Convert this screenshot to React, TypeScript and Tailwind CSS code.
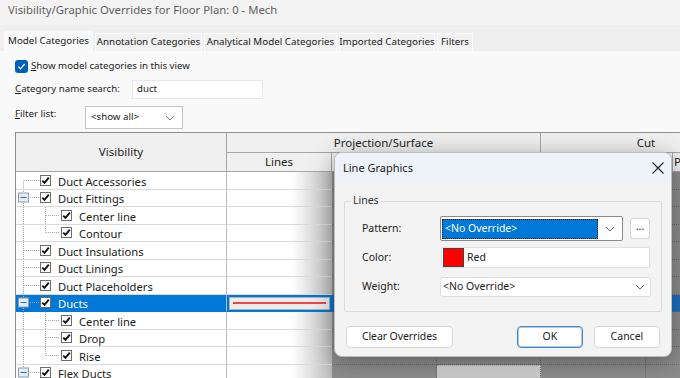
import React from "react";

type Row = {
  label: string;
  level: 1 | 2;
  expand?: boolean;
  first?: boolean;
  last?: boolean;
  selected?: boolean;
};

const rows: Row[] = [
  { label: "Duct Accessories", level: 1, first: true },
  { label: "Duct Fittings", level: 1, expand: true },
  { label: "Center line", level: 2 },
  { label: "Contour", level: 2, last: true },
  { label: "Duct Insulations", level: 1 },
  { label: "Duct Linings", level: 1 },
  { label: "Duct Placeholders", level: 1 },
  { label: "Ducts", level: 1, expand: true, selected: true },
  { label: "Center line", level: 2 },
  { label: "Drop", level: 2 },
  { label: "Rise", level: 2, last: true },
  { label: "Flex Ducts", level: 1, expand: true },
];

const dot = { stroke: "#a3a3a3", strokeWidth: 1, strokeDasharray: "1 1" };

// dotted tree connectors + expand box
const TreeLines = ({ row }: { row: Row }) => {
  const w = row.level === 1 ? 24 : 45;
  return (
    <svg width={w} height={17} className="shrink-0" viewBox={`0 0 ${w} 17`}>
      <line x1={7.5} y1={row.first ? 8.5 : 0} x2={7.5} y2={17} {...dot} />
      {row.level === 1 && <line x1={8} y1={8.5} x2={23} y2={8.5} {...dot} />}
      {row.level === 2 && (
        <>
          <line x1={29.5} y1={0} x2={29.5} y2={row.last ? 8.5 : 17} {...dot} />
          <line x1={30} y1={8.5} x2={44} y2={8.5} {...dot} />
        </>
      )}
      {row.expand && (
        <>
          <rect x={2.5} y={4} width={10} height={9} fill="#e4ebf3" stroke="#8d9db3" />
          <line x1={4.5} y1={8.5} x2={10.5} y2={8.5} stroke="#3f67a6" strokeWidth={1} />
        </>
      )}
    </svg>
  );
};

const SmallCheck = () => (
  <span className="w-[11px] h-[11px] shrink-0 bg-white border border-[#6d6d6d] flex items-center justify-center">
    <svg width="9" height="9" viewBox="0 0 9 9">
      <path d="M1.3 4.6 L3.5 6.9 L7.8 1.6" fill="none" stroke="#111" strokeWidth="1.9" />
    </svg>
  </span>
);

const Chevron = ({ color = "#6b6b6b" }: { color?: string }) => (
  <svg width="10" height="6" viewBox="0 0 10 6">
    <path d="M1 1 L5 5 L9 1" fill="none" stroke={color} strokeWidth="1" />
  </svg>
);

const LineGraphics = () => (
  <div className="absolute left-[334px] top-[152px] w-[338px] h-[205px] rounded-[8px] bg-[#f3f3f3] border border-[#bcbcbc] shadow-[0_4px_24px_rgba(0,0,0,0.35)] overflow-hidden flex flex-col text-[10.5px] text-[#222] whitespace-nowrap">
    <div className="h-[30px] bg-[#eef3f9] flex items-center justify-between pl-[8px] pr-[6px]">
      <span className="text-[11px] text-[#1b1b1b]">Line Graphics</span>
      <svg width="14" height="14" viewBox="0 0 14 14">
        <path d="M1.5 1.5 L12.5 12.5 M12.5 1.5 L1.5 12.5" stroke="#1b1b1b" strokeWidth="1.1" />
      </svg>
    </div>

    <div className="mt-[18px] mx-[9px] h-[111px] border border-[#dcdcdc] rounded-[2px] flex flex-col relative">
      <span className="absolute -top-[9px] left-[6px] px-[2px] bg-[#f3f3f3] text-[#333]">Lines</span>
      <div className="flex items-center mt-[14px] h-[25px]">
        <span className="w-[95px] pl-[17px]">Pattern:</span>
        <div className="w-[183px] h-[25px] bg-white border border-[#8a8a8a] rounded-[2px] flex items-center pl-[1px] pr-[7px]">
          <div className="flex-1 h-[20px] bg-[#0078d7] border border-dotted border-[#1c1c1c] flex items-center pl-[2px] text-white">
            &lt;No Override&gt;
          </div>
          <span className="ml-[7px]">
            <Chevron />
          </span>
        </div>
        <div className="ml-[7px] w-[20px] h-[21px] bg-white border border-[#d4d4d4] rounded-[3px] flex items-center justify-center leading-none pb-[4px]">
          ...
        </div>
      </div>
      <div className="flex items-center mt-[6px] h-[21px]">
        <span className="w-[96px] pl-[17px]">Color:</span>
        <div className="w-[209px] h-[21px] bg-white border border-[#e0e0e0] rounded-[2px] flex items-center pl-[1px]">
          <span className="w-[21px] h-[19px] bg-[#ff0000] border border-[#444]" />
          <span className="ml-[3px]">Red</span>
        </div>
      </div>
      <div className="flex items-center mt-[9px] h-[20px]">
        <span className="w-[95px] pl-[17px]">Weight:</span>
        <div className="w-[211px] h-[20px] bg-white border border-[#dedede] rounded-[3px] flex items-center justify-between pl-[2px] pr-[5px]">
          &lt;No Override&gt;
          <Chevron />
        </div>
      </div>
    </div>

    <div className="flex items-center mt-[14px] px-[11px] h-[22px] text-[#1b1b1b]">
      <button className="w-[110px] h-[22px] bg-white border border-[#d6d6d6] rounded-[4px] tracking-[-0.1px]">
        Clear Overrides
      </button>
      <button className="ml-[64px] w-[68px] h-[22px] bg-white border border-[#4b87c8] rounded-[4px] shadow-[inset_0_0_0_1px_#a9c8ea]">
        OK
      </button>
      <button className="ml-[11px] w-[68px] h-[22px] bg-white border border-[#d6d6d6] rounded-[4px]">
        Cancel
      </button>
    </div>
  </div>
);

const TableRow = ({ row, index }: { row: Row; index: number }) => {
  const sel = !!row.selected;
  const grayCell = `h-full shrink-0 border-r border-b border-dotted border-[#6a6a6a] ${sel ? "bg-[#1d6fc0]" : ""}`;
  return (
    <div className="flex h-[17.5px]">
      <div
        className={`w-[211px] shrink-0 h-full flex items-center overflow-hidden border-r border-b border-r-[#bdbdbd] ${
          sel ? "bg-[#0078d7] border-b-[#0078d7]" : "bg-white border-b-[#dadada]"
        }`}
      >
        <TreeLines row={row} />
        <SmallCheck />
        <span className={`ml-[7px] pt-[2px] text-[11.2px] leading-none whitespace-nowrap ${sel ? "text-white" : "text-[#1b1b1b]"}`}>
          {row.label}
        </span>
      </div>
      {sel ? (
        <div className="w-[105px] shrink-0 h-full border border-[#0078d7] bg-[#0078d7] p-[1px]">
          <div className="w-full h-full bg-[#ececec] border border-[#b0b0b0] flex items-center px-[3px]">
            <div className="w-full h-[2px] bg-[#f04646]" />
          </div>
        </div>
      ) : (
        <div className="w-[105px] shrink-0 h-full border-b border-[#dadada] bg-[linear-gradient(to_right,#ffffff_62%,#bcbcbc_100%)]" />
      )}
      <div className={`w-[105px] ${grayCell}`} />
      <div
        className={`w-[104px] ${grayCell} ${
          index === rows.length - 1 ? "bg-[linear-gradient(to_bottom,#d9d9d9,#c4c4c4)] border-t border-t-[#b9b9b9]" : ""
        }`}
      />
      <div className={`w-[105px] ${grayCell}`} />
      <div className={`w-[105px] ${grayCell}`} />
    </div>
  );
};

export default function App() {
  const tabs = [
    { t: "Annotation Categories", w: "w-[107px]" },
    { t: "Analytical Model Categories", w: "w-[133px]" },
    { t: "Imported Categories", w: "w-[96px]" },
    { t: "Filters", w: "w-[36px]" },
  ];
  return (
    <div className="w-[680px] h-[378px] overflow-hidden relative bg-[#f9f9f9] font-['Noto_Sans','DejaVu_Sans',sans-serif] text-[#1b1b1b] whitespace-nowrap">
      {/* title */}
      <div className="h-[25px] bg-[#f3f3f3] pl-[8px] pt-[2px] text-[11.3px] text-[#5f5f5f]">
        Visibility/Graphic Overrides for Floor Plan: 0 - Mech
      </div>

      {/* tabs */}
      <div className="h-[26px] bg-[#efefef] flex items-end pl-[4px] text-[9.8px]">
        <div className="h-[20px] w-[89px] bg-[#f9f9f9] flex items-center justify-center">Model Categories</div>
        {tabs.map(({ t, w }) => (
          <div
            key={t}
            className={`${w} h-[18px] ml-[2px] bg-[#f1f1f1] border-x border-t border-[#fbfbfb] flex items-center justify-center`}
          >
            {t}
          </div>
        ))}
      </div>

      {/* options */}
      <div className="pl-[15px] pt-[8px] flex flex-col text-[9.7px]">
        <div className="flex items-center h-[14px]">
          <span className="w-[13px] h-[13px] rounded-[3px] bg-[#005fb8] flex items-center justify-center">
            <svg width="9" height="9" viewBox="0 0 9 9">
              <path d="M1.4 4.7 L3.5 6.8 L7.7 2" fill="none" stroke="#fff" strokeWidth="1.2" />
            </svg>
          </span>
          <span className="ml-[3px]">
            <span className="underline">S</span>how model categories in this view
          </span>
        </div>
        <div className="flex items-center mt-[7px] h-[19px]">
          <span className="w-[117px]">
            <span className="underline">C</span>ategory name search:
          </span>
          <div className="w-[131px] h-[19px] bg-white border border-[#e6e6e6] flex items-center pl-[4px]">duct</div>
        </div>
        <div className="flex items-start mt-[7px] h-[23px]">
          <span className="w-[70px] pt-[1px]">
            <span className="underline">F</span>ilter list:
          </span>
          <div className="w-[98px] h-[23px] bg-white border border-[#c4c4c4] flex items-center justify-between pl-[5px] pr-[7px]">
            &lt;show all&gt;
            <Chevron color="#7a7a7a" />
          </div>
        </div>
      </div>

      {/* table */}
      <div className="ml-[15px] mt-[3px] border-l border-t border-[#8f8f8f] w-[800px]">
        <div className="flex h-[39px] bg-[#f0f0f0] text-[11.5px] text-[#222]">
          <div className="w-[211px] shrink-0 border-r border-b border-[#a6a6a6] flex items-center justify-center">
            Visibility
          </div>
          <div className="flex flex-col">
            <div className="flex h-[20px]">
              <div className="w-[314px] border-r border-b border-[#a6a6a6] flex items-center justify-center">
                Projection/Surface
              </div>
              <div className="w-[210px] border-b border-[#a6a6a6] flex items-center justify-center">Cut</div>
            </div>
            <div className="flex h-[19px]">
              <div className="w-[105px] border-r border-b border-[#a6a6a6] flex items-center justify-center">
                Lines
              </div>
              <div className="w-[105px] border-r border-b border-[#a6a6a6]" />
              <div className="w-[104px] border-r border-b border-[#a6a6a6]" />
              <div className="w-[132px] border-r border-b border-[#a6a6a6]" />
              <div className="w-[105px] border-b border-[#a6a6a6] flex items-center pl-[1px]">Patterns</div>
            </div>
          </div>
        </div>
        <div className="bg-[#8c8c8c]">
          {rows.map((r, i) => (
            <TableRow key={i} row={r} index={i} />
          ))}
        </div>
      </div>

      <LineGraphics />
    </div>
  );
}
